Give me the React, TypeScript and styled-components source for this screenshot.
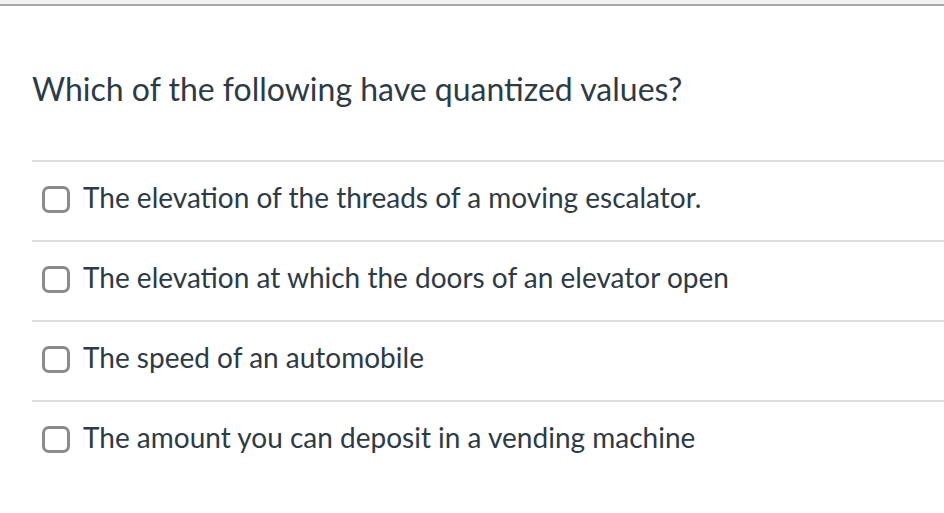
import React from "react";
import styled, { createGlobalStyle } from "styled-components";

const Global = createGlobalStyle`
  html, body { margin: 0; padding: 0; background: #fff; }
  body { font-family: Lato, "Open Sans", sans-serif; color: #2d3b45; }
`;

const Page = styled.div`
  width: 944px;
  min-height: 513px;
  background: #fff;
`;

const TopBar = styled.div`
  height: 4px;
  background: #f2f2f2;
  border-bottom: 2px solid #a8a8a8;
`;

const Content = styled.div`
  padding-left: 32px;
`;

const Question = styled.h2`
  margin: 0 0 52px 0;
  padding: 64px 0 0 0;
  font-size: 32px;
  font-weight: 400;
  line-height: 38px;
  color: #2d3b45;
  font-family: Lato, sans-serif;
`;

const Answers = styled.div`
  display: flex;
  flex-direction: column;
`;

const Row = styled.label`
  display: flex;
  align-items: center;
  gap: 13px;
  height: 80px;
  box-sizing: border-box;
  border-top: 2px solid #dddddd;
  padding: 0 0 4px 10px;
  cursor: pointer;
`;

const Box = styled.span`
  width: 28px;
  height: 27px;
  box-sizing: border-box;
  border: 3px solid #8a8a8a;
  border-radius: 7px;
  flex-shrink: 0;
  background: #fff;
`;

const Text = styled.span`
  font-size: 28px;
  line-height: 34px;
  padding-bottom: 5px;
  color: #2d3b45;
  font-family: Lato, sans-serif;
`;

const options = [
  "The elevation of the threads of a moving escalator.",
  "The elevation at which the doors of an elevator open",
  "The speed of an automobile",
  "The amount you can deposit in a vending machine",
];

export default function App() {
  return (
    <Page>
      <Global />
      <TopBar />
      <Content>
        <Question>Which of the following have quantized values?</Question>
        <Answers>
          {options.map((o) => (
            <Row key={o}>
              <Box />
              <Text>{o}</Text>
            </Row>
          ))}
        </Answers>
      </Content>
    </Page>
  );
}
